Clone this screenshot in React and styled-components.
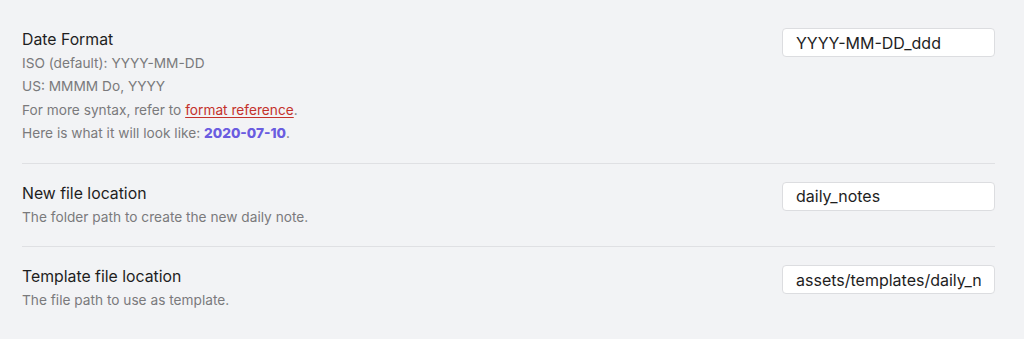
import React from "react";
import styled, { createGlobalStyle } from "styled-components";

const Global = createGlobalStyle`
  html, body { margin: 0; padding: 0; background: #f2f3f5; }
  body { font-family: Inter, "Noto Sans", sans-serif; -webkit-font-smoothing: antialiased; }
`;

const Page = styled.div`
  padding: 10px 29px 0 22px;
  background: #f2f3f5;
  min-height: 339px;
  box-sizing: border-box;
`;

const Item = styled.div`
  display: flex;
  align-items: flex-start;
  justify-content: space-between;
  gap: 20px;
  padding: 18px 0 17.5px;
  border-top: ${(p) => (p.$first ? "none" : "1px solid #dfe0e3")};
`;

const Info = styled.div`
  flex: 1;
  min-width: 0;
`;

const Name = styled.div`
  font-size: 15.8px;
  line-height: 24px;
  color: #1e1e1e;
`;

const Desc = styled.div`
  font-size: 13.7px;
  line-height: 23.3px;
  color: #7a7a7c;
`;

const Link = styled.a`
  color: #c4312b;
  text-decoration: underline;
  text-underline-offset: 2px;
`;

const Sample = styled.b`
  color: #6a5ce0;
  font-weight: 800;
`;

const Input = styled.input`
  box-sizing: border-box;
  width: 213px;
  height: 29px;
  padding: 0 13px;
  border: 1px solid #dcdde0;
  border-radius: 4px;
  background: #fff;
  font-family: Inter, "Noto Sans", sans-serif;
  font-size: 16px;
  color: #1e1e1e;
  outline: none;
  flex-shrink: 0;
`;

export default function App() {
  return (
    <>
      <Global />
      <Page>
        <Item $first>
          <Info>
            <Name>Date Format</Name>
            <Desc>ISO (default): YYYY-MM-DD</Desc>
            <Desc>US: MMMM Do, YYYY</Desc>
            <Desc>
              For more syntax, refer to <Link href="#">format reference</Link>.
            </Desc>
            <Desc>
              Here is what it will look like: <Sample>2020-07-10</Sample>.
            </Desc>
          </Info>
          <Input defaultValue="YYYY-MM-DD_ddd" />
        </Item>
        <Item>
          <Info>
            <Name>New file location</Name>
            <Desc>The folder path to create the new daily note.</Desc>
          </Info>
          <Input defaultValue="daily_notes" />
        </Item>
        <Item>
          <Info>
            <Name>Template file location</Name>
            <Desc>The file path to use as template.</Desc>
          </Info>
          <Input defaultValue="assets/templates/daily_notes" />
        </Item>
      </Page>
    </>
  );
}
